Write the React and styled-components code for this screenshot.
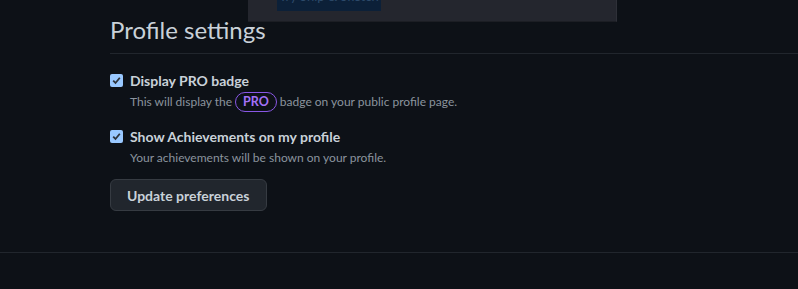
import React from 'react';
import styled, { createGlobalStyle } from 'styled-components';

const Global = createGlobalStyle`
  html, body { margin: 0; padding: 0; background: #0d1117; }
  body { font-family: "Lato", "Noto Sans", sans-serif; color: #c9d1d9; }
`;

const Page = styled.div`
  position: relative;
  width: 798px;
  height: 289px;
  overflow: hidden;
  background: #0d1117;
`;

const Content = styled.div`
  padding: 14px 0 0 110px;
  height: 238px;
`;

const Heading = styled.h2`
  margin: 0;
  font-size: 24px;
  font-weight: 400;
  line-height: 32px;
  color: #c9d1d9;
  padding-bottom: 7px;
  border-bottom: 1px solid #21262d;
`;

const Options = styled.div`
  display: flex;
  flex-direction: column;
  gap: 16px;
  margin-top: 18px;
`;

const Option = styled.div`
  display: grid;
  grid-template-columns: 13px 1fr;
  column-gap: 7px;
`;

const Check = styled.span`
  width: 13px;
  height: 13px;
  margin-top: 2px;
  border-radius: 2px;
  background: #99c8ff;
  display: flex;
  align-items: center;
  justify-content: center;
`;

const Label = styled.div`
  font-size: 14px;
  font-weight: 700;
  line-height: 18px;
  color: #c9d1d9;
`;

const Note = styled.div`
  grid-column: 2;
  font-size: 12px;
  line-height: 20px;
  margin-top: 2px;
  color: #8b949e;
  display: flex;
  align-items: center;
`;

const Pro = styled.span`
  display: inline-flex;
  align-items: center;
  height: 18px;
  padding: 0 7px;
  margin: 0 3px;
  border: 1px solid #8957e5;
  border-radius: 10px;
  color: #a371f7;
  font-weight: 700;
  font-size: 12.5px;
`;

const Button = styled.button`
  margin-top: 11px;
  height: 32px;
  padding: 0 17px 0 16px;
  font-family: inherit;
  font-size: 14px;
  font-weight: 700;
  color: #c9d1d9;
  background: #21262d;
  border: 1px solid #363b42;
  border-radius: 6px;
`;

const Footer = styled.div`
  border-top: 1px solid #21262d;
  height: 50px;
`;

const Popup = styled.div`
  position: absolute;
  left: 248px;
  top: -40px;
  width: 368px;
  height: 61px;
  background: #24262e;
  border-right: 1px solid #2e3038;
  border-bottom: 1px solid #1c1e24;
`;

const Cta = styled.div`
  position: absolute;
  left: 29px;
  bottom: 10px;
  width: 104px;
  height: 30px;
  background: #0c2038;
  color: #2d4a6a;
  font-size: 13px;
  line-height: 30px;
  text-align: center;
  overflow: hidden;
  white-space: nowrap;
`;

const Tick = () => (
  <svg width="9" height="9" viewBox="0 0 9 9">
    <path d="M1.2 4.7 L3.5 7 L7.8 1.8" fill="none" stroke="#2d333b" strokeWidth="1.8" />
  </svg>
);

export default function App() {
  return (
    <Page>
      <Global />
      <Content>
        <Heading>Profile settings</Heading>
        <Options>
          <Option>
            <Check><Tick /></Check>
            <Label>Display PRO badge</Label>
            <Note>This will display the <Pro>PRO</Pro> badge on your public profile page.</Note>
          </Option>
          <Option>
            <Check><Tick /></Check>
            <Label>Show Achievements on my profile</Label>
            <Note>Your achievements will be shown on your profile.</Note>
          </Option>
        </Options>
        <Button>Update preferences</Button>
      </Content>
      <Footer />
      <Popup>
        <Cta>Try Ship &amp; Sketch</Cta>
      </Popup>
    </Page>
  );
}
